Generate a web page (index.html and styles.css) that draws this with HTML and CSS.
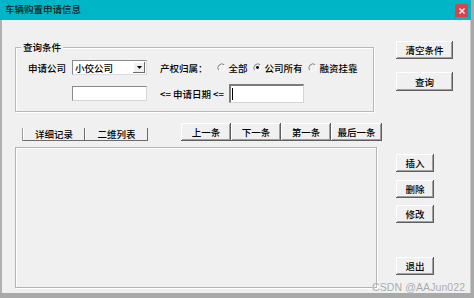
FILE: index.html
```html
<!DOCTYPE html>
<html lang="zh">
<head>
<meta charset="utf-8">
<link rel="stylesheet" href="styles.css">
</head>
<body>
<div class="window">
  <div class="titlebar">
    <span class="title">车辆购置申请信息</span>
    <span class="close"><svg width="6" height="6" viewBox="0 0 6 6"><path d="M0.5 0.5L5.5 5.5M5.5 0.5L0.5 5.5" stroke="#fff" stroke-width="1.3"/></svg></span>
  </div>
  <div class="client">
    <div class="leftcol">
      <div class="group">
        <span class="legend">查询条件</span>
        <div class="grid">
          <span class="label">申请公司</span>
          <div class="combo"><span class="combo-text">小佼公司</span><span class="combo-btn"><svg width="5" height="3" viewBox="0 0 5 3"><path d="M0 0H5L2.5 3Z" fill="#000"/></svg></span></div>
          <div class="radios">
            <span class="label">产权归属：</span>
            <span class="radio"><svg class="rb" width="9" height="9" viewBox="0 0 9 9"><path d="M7.3 1.7A4 4 0 0 0 1.7 7.3" stroke="#808080" fill="none"/><path d="M1.7 7.3A4 4 0 0 0 7.3 1.7" stroke="#fff" fill="none"/></svg>全部</span>
            <span class="radio"><svg class="rb" width="9" height="9" viewBox="0 0 9 9"><path d="M7.3 1.7A4 4 0 0 0 1.7 7.3" stroke="#808080" fill="none"/><path d="M1.7 7.3A4 4 0 0 0 7.3 1.7" stroke="#fff" fill="none"/><circle cx="4.5" cy="4.5" r="1.4" fill="#000"/></svg>公司所有</span>
            <span class="radio"><svg class="rb" width="9" height="9" viewBox="0 0 9 9"><path d="M7.3 1.7A4 4 0 0 0 1.7 7.3" stroke="#808080" fill="none"/><path d="M1.7 7.3A4 4 0 0 0 7.3 1.7" stroke="#fff" fill="none"/></svg>融资挂靠</span>
          </div>
          <span></span>
          <div class="input"></div>
          <div class="daterow">
            <span class="label">&lt;= 申请日期 &lt;=</span>
            <div class="input input-focus"><span class="caret"></span></div>
          </div>
        </div>
      </div>
      <div class="navrow">
        <div class="tabs">
          <span class="tab">详细记录</span>
          <span class="tab">二维列表</span>
        </div>
        <div class="navbtns">
          <span class="btn nav">上一条</span>
          <span class="btn nav">下一条</span>
          <span class="btn nav">第一条</span>
          <span class="btn nav">最后一条</span>
        </div>
      </div>
      <div class="panel"></div>
    </div>
    <div class="rightcol">
      <span class="btn wide b-clear">清空条件</span>
      <span class="btn wide b-query">查询</span>
      <span class="btn small b-insert">插入</span>
      <span class="btn small b-delete">删除</span>
      <span class="btn small b-edit">修改</span>
      <span class="btn small b-exit">退出</span>
    </div>
    <span class="watermark">CSDN @AAJun022</span>
  </div>
</div>
</body>
</html>
```
FILE: styles.css
```css
* { box-sizing: border-box; }
html, body { margin: 0; padding: 0; }
body {
  width: 474px;
  height: 298px;
  background: #a9a9a9;
  font-family: "Noto Sans CJK SC", "Liberation Sans", sans-serif;
  font-size: 9.5px;
  font-weight: 500;
  color: #000;
  overflow: hidden;
}
.window {
  width: 471px;
  height: 293px;
  display: flex;
  flex-direction: column;
}
.titlebar {
  height: 20px;
  background: #00b5c5;
  display: flex;
  align-items: center;
  justify-content: space-between;
  padding: 0 3px 0 5px;
}
.title {
  font-size: 9.5px;
  color: #142326;
  line-height: 1;
}
.close {
  width: 13px;
  height: 13px;
  background: #d9434e;
  display: flex;
  align-items: center;
  justify-content: center;
  margin-top: 1px;
}
.client {
  flex: 1;
  position: relative;
  background: #f0f0f0;
  border-left: 2px solid #b0b0b0;
  border-right: 1px solid #c8c8c8;
  padding-left: 13px;
  display: flex;
}
.leftcol {
  width: 362px;
  display: flex;
  flex-direction: column;
}
.group {
  position: relative;
  margin-top: 27px;
  width: 359px;
  height: 65px;
  border: 1px solid #b9b9b9;
  box-shadow: inset 1px 1px 0 #fff, 1px 1px 0 #fff;
  padding: 12px 0 0 12px;
}
.legend {
  position: absolute;
  top: -7px;
  left: 5px;
  padding: 0 2px;
  background: #f0f0f0;
  line-height: 12px;
}
.grid {
  display: grid;
  grid-template-columns: 44px 75px auto;
  grid-template-rows: 15px 19px;
  column-gap: 0;
  row-gap: 9px;
  align-items: center;
}
.label { line-height: 12px; white-space: nowrap; }
.combo {
  height: 15px;
  background: #fff;
  border: 1px solid #8a8a8a;
  border-right-color: #dcdcdc;
  border-bottom-color: #dcdcdc;
  display: flex;
  align-items: center;
  justify-content: space-between;
  padding-left: 2px;
}
.combo-text { line-height: 12px; }
.combo-btn {
  width: 12px;
  height: 11px;
  margin-right: 1px;
  background: #f0f0f0;
  box-shadow: inset -1px -1px 0 #6a6a6a, inset 1px 1px 0 #fff;
  display: flex;
  align-items: center;
  justify-content: center;
}
.radios {
  display: flex;
  align-items: center;
  margin-left: 13px;
  white-space: nowrap;
}
.radio {
  display: flex;
  align-items: center;
  margin-left: 5px;
  line-height: 12px;
  flex-shrink: 0;
}
.radios .label { margin-right: 4px; }
.rb { margin-right: 3px; flex-shrink: 0; }
.input {
  height: 15px;
  width: 75px;
  background: #fff;
  border: 1px solid #8a8a8a;
  border-right-color: #d5d5d5;
  border-bottom-color: #d5d5d5;
}
.daterow {
  display: flex;
  align-items: center;
  gap: 5px;
  margin-left: 13px;
}
.input-focus {
  height: 19px;
  border-top: 2px solid #7c7c7c;
  border-left: 2px solid #7c7c7c;
  padding: 2px 0 0 1px;
}
.caret {
  display: block;
  width: 1px;
  height: 12px;
  background: #000;
}
.navrow {
  margin-top: 11px;
  height: 18px;
  display: flex;
  align-items: flex-end;
}
.tabs {
  margin-left: 7px;
  display: flex;
  height: 13px;
}
.tab {
  width: 63px;
  height: 13px;
  line-height: 12px;
  text-align: center;
  box-shadow: inset -1px -1px 0 #6a6a6a, inset 1px 0 0 #fff;
  border-left: 1px solid #9a9a9a;
}
.tab + .tab { border-left: none; }
.navbtns {
  display: flex;
  margin-left: 33px;
  align-self: stretch;
}
.btn {
  display: flex;
  align-items: center;
  justify-content: center;
  height: 18px;
  background: #f0f0f0;
  line-height: 12px;
  box-shadow: inset -1px -1px 0 #5e5e5e, inset 1px 1px 0 #fff, inset -2px -2px 0 #a0a0a0;
}
.nav { width: 50px; }
.nav:last-child { width: 51px; }
.panel {
  margin-top: 6px;
  width: 362px;
  height: 141px;
  border: 1px solid #b4b4b4;
  box-shadow: inset 1px 1px 0 #fff, 1px 1px 0 #fff;
}
.rightcol {
  margin-left: 19px;
  display: flex;
  flex-direction: column;
  align-items: flex-start;
}
.wide { width: 57px; }
.small { width: 38px; }
.b-clear { margin-top: 21px; }
.b-query { margin-top: 13px; height: 19px; }
.b-insert { margin-top: 63px; }
.b-delete { margin-top: 8px; }
.b-edit { margin-top: 7px; }
.b-exit { margin-top: 34px; }
.watermark {
  position: absolute;
  left: 370px;
  top: 261px;
  font-family: "Liberation Sans", Arial, sans-serif;
  font-weight: 400;
  font-size: 10.5px;
  color: #a8a8a8;
  text-shadow: 0 0 1px #fff;
  letter-spacing: 0.1px;
  line-height: 12px;
}
```
